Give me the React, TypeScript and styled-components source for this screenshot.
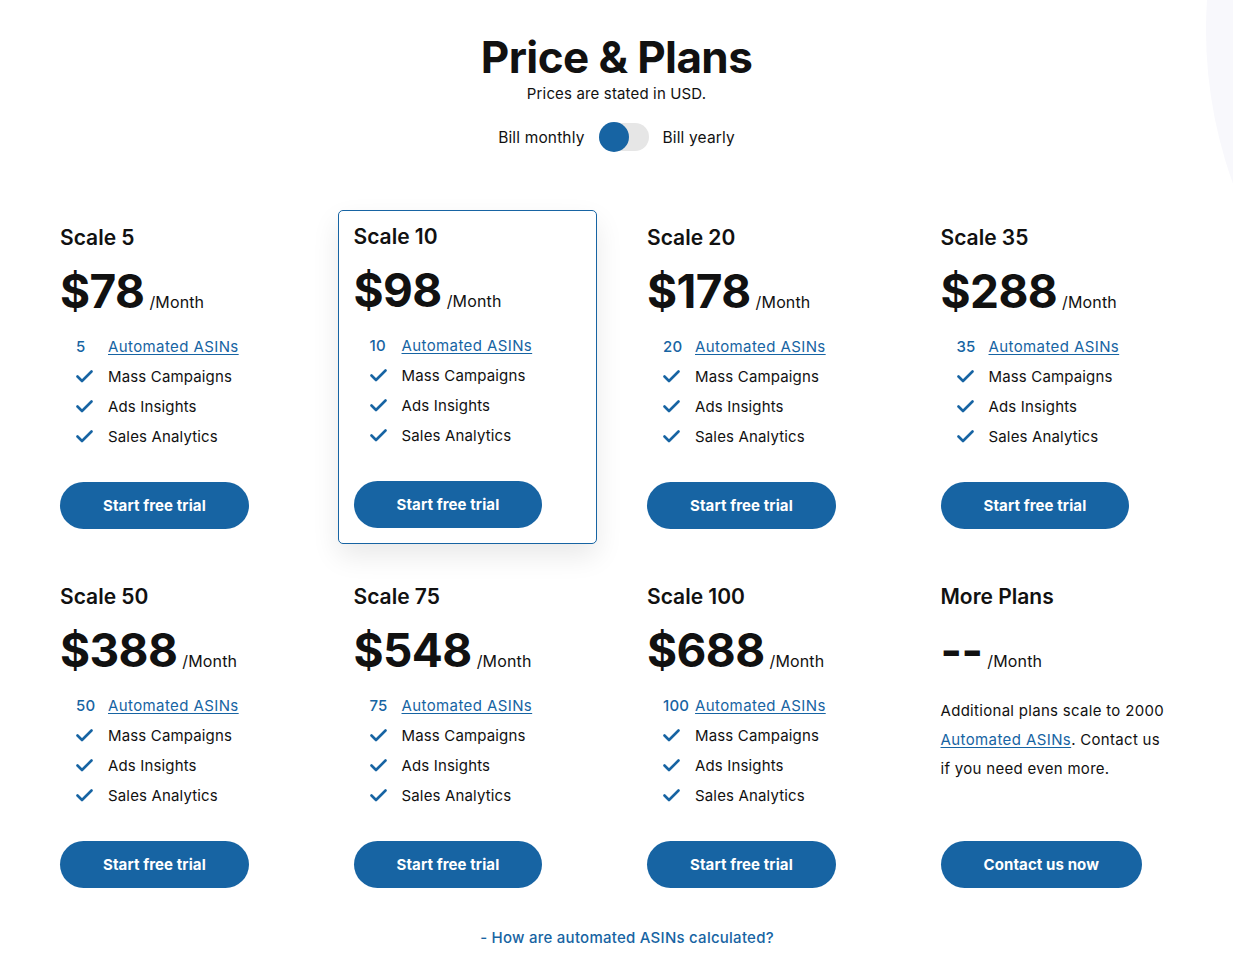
import * as React from 'react';
import styled, { createGlobalStyle, css } from 'styled-components';

const GlobalStyle = createGlobalStyle`
  html, body {
    margin: 0;
    padding: 0;
    background: #ffffff;
  }
  body {
    font-family: Inter, "Open Sans", sans-serif;
    color: #111111;
    letter-spacing: 0.15px;
    -webkit-font-smoothing: antialiased;
  }
`;

const BLUE = '#1764a3';

const Page = styled.div`
  position: relative;
  width: 1233px;
  min-height: 970px;
  overflow: hidden;
`;

const Blob = styled.div`
  position: absolute;
  top: -420px;
  left: 1206px;
  width: 900px;
  height: 900px;
  border-radius: 50%;
  background: #f8f8fc;
  pointer-events: none;
`;

const Header = styled.header`
  position: relative;
  display: flex;
  flex-direction: column;
  align-items: center;
  padding-top: 29px;
`;

const Title = styled.h1`
  margin: 0;
  font-size: 44px;
  line-height: 56px;
  font-weight: 700;
  letter-spacing: -0.6px;
`;

const Subtitle = styled.p`
  margin: -1px 0 0;
  font-size: 15px;
  line-height: 20px;
`;

const ToggleRow = styled.div`
  display: flex;
  align-items: center;
  gap: 14px;
  margin-top: 19px;
  font-size: 15.5px;
`;

const Track = styled.div`
  width: 50px;
  height: 28px;
  border-radius: 14px;
  background: #e6e6e6;
  display: flex;
  align-items: center;
`;

const Knob = styled.span`
  width: 30px;
  height: 30px;
  border-radius: 50%;
  background: ${BLUE};
`;

const Grid = styled.section`
  position: relative;
  display: grid;
  grid-template-columns: repeat(4, 259px);
  column-gap: 34.5px;
  row-gap: 25px;
  margin: 61px 0 0 44px;
`;

const Card = styled.div<{ $featured?: boolean }>`
  display: flex;
  flex-direction: column;
  padding: 10px 15px 15px;
  border: 1px solid transparent;
  border-radius: 5px;
  background: #fff;
  ${p =>
    p.$featured &&
    css`
      border-color: ${BLUE};
      padding-top: 11px;
      padding-bottom: 15px;
      transform: translateY(-2px);
      box-shadow: 0 12px 28px rgba(0, 0, 0, 0.09);
    `}
`;

const PlanName = styled.h3`
  margin: 0;
  font-size: 21px;
  line-height: 30px;
  font-weight: 600;
  letter-spacing: 0;
`;

const PriceRow = styled.div`
  display: flex;
  align-items: baseline;
  gap: 5px;
  margin-top: 8px;
  height: 60px;
`;

const Amount = styled.span`
  font-size: 46px;
  line-height: 60px;
  font-weight: 700;
  letter-spacing: -0.6px;
`;

const Per = styled.span`
  font-size: 16px;
`;

const Features = styled.ul`
  list-style: none;
  margin: 10px 0 0;
  padding: 0 0 0 16px;
`;

const Feature = styled.li`
  display: flex;
  align-items: center;
  height: 30px;
  font-size: 15px;
`;

const Lead = styled.span`
  min-width: 26px;
  margin-right: 6px;
  color: ${BLUE};
  font-weight: 500;
  display: flex;
  align-items: center;
`;

const Link = styled.a`
  color: ${BLUE};
  text-decoration: underline;
  text-underline-offset: 2px;
  letter-spacing: 0.4px;
  cursor: pointer;
`;

const Button = styled.button<{ $auto?: boolean }>`
  align-self: flex-start;
  margin-top: ${p => (p.$auto ? 'auto' : '31px')};
  height: 47px;
  padding: 0 43px;
  min-width: 188px;
  border: none;
  border-radius: 24px;
  background: ${BLUE};
  color: #fff;
  font-family: inherit;
  font-size: 15px;
  font-weight: 700;
  letter-spacing: 0.1px;
  cursor: pointer;
`;

const Blurb = styled.p`
  margin: 16px 0 0;
  max-width: 226px;
  font-size: 15px;
  line-height: 29px;
  letter-spacing: 0.3px;
`;

const Footer = styled.div`
  position: relative;
  text-align: center;
  margin-top: 24px;
  padding-left: 21px;
  font-size: 15px;
  line-height: 20px;
  color: ${BLUE};
  font-weight: 500;
  letter-spacing: 0.25px;
`;

const Check = () => (
  <svg width="17" height="13" viewBox="0 0 17 13">
    <path d="M1.5 6.5 L6 11 L15.5 1.5" fill="none" stroke={BLUE} strokeWidth="2.6" strokeLinecap="round" strokeLinejoin="round" />
  </svg>
);

interface Plan {
  asins: number;
  price: number;
}

const plans: Plan[] = [
  { asins: 5, price: 78 },
  { asins: 10, price: 98 },
  { asins: 20, price: 178 },
  { asins: 35, price: 288 },
  { asins: 50, price: 388 },
  { asins: 75, price: 548 },
  { asins: 100, price: 688 },
];

const features = ['Mass Campaigns', 'Ads Insights', 'Sales Analytics'];

export default function App() {
  return (
    <Page>
      <GlobalStyle />
      <Blob />
      <Header>
        <Title>Price &amp; Plans</Title>
        <Subtitle>Prices are stated in USD.</Subtitle>
        <ToggleRow>
          <span>Bill monthly</span>
          <Track>
            <Knob />
          </Track>
          <span>Bill yearly</span>
        </ToggleRow>
      </Header>
      <Grid>
        {plans.map(plan => (
          <Card key={plan.asins} $featured={plan.asins === 10}>
            <PlanName>Scale {plan.asins}</PlanName>
            <PriceRow>
              <Amount>${plan.price}</Amount>
              <Per>/Month</Per>
            </PriceRow>
            <Features>
              <Feature>
                <Lead>{plan.asins}</Lead>
                <Link>Automated ASINs</Link>
              </Feature>
              {features.map(f => (
                <Feature key={f}>
                  <Lead>
                    <Check />
                  </Lead>
                  {f}
                </Feature>
              ))}
            </Features>
            <Button>Start free trial</Button>
          </Card>
        ))}
        <Card>
          <PlanName>More Plans</PlanName>
          <PriceRow>
            <Amount>--</Amount>
            <Per>/Month</Per>
          </PriceRow>
          <Blurb>
            Additional plans scale to 2000 <Link>Automated ASINs</Link>. Contact us if you need even more.
          </Blurb>
          <Button $auto>Contact us now</Button>
        </Card>
      </Grid>
      <Footer>- How are automated ASINs calculated?</Footer>
    </Page>
  );
}
